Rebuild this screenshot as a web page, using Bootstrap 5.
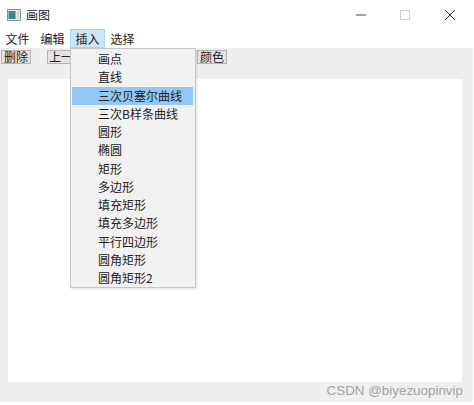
<!DOCTYPE html>
<html lang="zh">
<head>
<meta charset="utf-8">
<title>画图</title>
<link href="https://cdn.jsdelivr.net/npm/bootstrap@5.3.0/dist/css/bootstrap.min.css" rel="stylesheet">
<style>
html, body { margin: 0; height: 405px; overflow: hidden; background: #fff; }
body { font-family: "Noto Sans CJK SC", "Liberation Sans", sans-serif; font-size: 12px; color: #222; position: relative; }
.win-title { height: 29px; padding-left: 7px; }
.win-title .ttl { margin-left: 5px; line-height: 29px; }
.ctl { width: 12px; height: 12px; display: block; }
.win-ctls { gap: 32px; padding-right: 18px; }
.menu-bar { height: 19px; }
.menu-it { width: 35px; height: 19px; line-height: 19px; text-align: center; }
.menu-it.on { background: #cde6f7; border: 1px solid #a9d6f3; line-height: 17px; }
.work { background: #efefef; height: 354px; margin-right: 1px; padding: 0 11px 20px 8px; }
.tool-row { height: 31px; padding: 2px 0 0 0; margin-left: -7px; }
.tool-btn { height: 14px; width: 30px; line-height: 12px; font-size: 12px; text-align: center; background: #e4e4e4; border: 1px solid #b4b4b4; color: #222; }
.gap-a { margin-left: 16px; width: 50px; text-align: left; padding-left: 1px; }
.gap-b { margin-left: 100px; }
.canvas-area { height: 303px; background: #fff; }
.pop { position: absolute; left: 70px; top: 48px; width: 126px; height: 240px; background: #f1f1f1; border: 1px solid #c6c6c6; padding: 1px 2px 0 1px; box-shadow: 1px 1px 2px rgba(0,0,0,.12); }
.pop-it { height: 18.25px; line-height: 18px; padding-left: 26px; }
.pop-it.on { background: #90c8f6; }
.mark-csdn { position: absolute; right: 11px; bottom: 6px; font-family: "Liberation Sans", sans-serif; font-size: 13.4px; line-height: 16px; color: #a2a2a2; }
</style>
</head>
<body>
<div class="win-title d-flex align-items-center justify-content-between">
  <div class="d-flex align-items-center">
    <svg width="14" height="12" viewBox="0 0 14 12"><rect x=".5" y=".5" width="13" height="11" fill="#e8efee" stroke="#7a9a98"/><rect x="1.5" y="2" width="7" height="8" fill="#3f8480"/><rect x="9.5" y="2" width="3" height="8" fill="#d3dcdc"/></svg>
    <span class="ttl">画图</span>
  </div>
  <div class="win-ctls d-flex align-items-center">
    <svg class="ctl" viewBox="0 0 12 12"><path d="M0 6h10" stroke="#666" stroke-width="1.2"/></svg>
    <svg class="ctl" viewBox="0 0 12 12"><rect x="0.5" y="1.5" width="9" height="9" fill="none" stroke="#d0d0d0"/></svg>
    <svg class="ctl" viewBox="0 0 12 12"><path d="M1 1l10 10M11 1L1 11" stroke="#333" stroke-width="1"/></svg>
  </div>
</div>
<div class="menu-bar d-flex">
  <div class="menu-it">文件</div>
  <div class="menu-it">编辑</div>
  <div class="menu-it on">插入</div>
  <div class="menu-it">选择</div>
</div>
<div class="work">
  <div class="tool-row d-flex align-items-start">
    <div class="tool-btn">删除</div>
    <div class="tool-btn gap-a">上一</div>
    <div class="tool-btn gap-b">颜色</div>
  </div>
  <div class="canvas-area"></div>
</div>
<div class="pop">
  <div class="pop-it">画点</div>
  <div class="pop-it">直线</div>
  <div class="pop-it on">三次贝塞尔曲线</div>
  <div class="pop-it">三次B样条曲线</div>
  <div class="pop-it">圆形</div>
  <div class="pop-it">椭圆</div>
  <div class="pop-it">矩形</div>
  <div class="pop-it">多边形</div>
  <div class="pop-it">填充矩形</div>
  <div class="pop-it">填充多边形</div>
  <div class="pop-it">平行四边形</div>
  <div class="pop-it">圆角矩形</div>
  <div class="pop-it">圆角矩形2</div>
</div>
<div class="mark-csdn">CSDN @biyezuopinvip</div>
<script src="https://cdn.jsdelivr.net/npm/bootstrap@5.3.0/dist/js/bootstrap.bundle.min.js"></script>
</body>
</html>
